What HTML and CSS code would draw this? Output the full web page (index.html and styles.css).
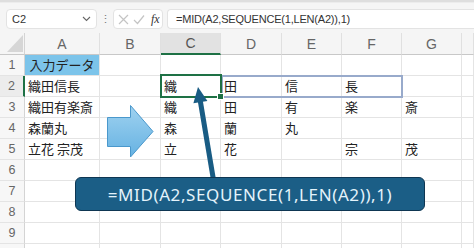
FILE: index.html
```html
<!DOCTYPE html>
<html lang="ja">
<head>
<meta charset="utf-8">
<title>MID + SEQUENCE</title>
<link rel="stylesheet" href="styles.css">
</head>
<body>
<div class="app">
  <div class="ribbon-edge"></div>
  <div class="formula-bar">
    <div class="name-box">
      <span>C2</span>
      <svg class="chevron" width="9" height="6" viewBox="0 0 9 6"><path d="M1 1 L4.5 4.5 L8 1" fill="none" stroke="#666" stroke-width="1.1"/></svg>
    </div>
    <span class="grip">⋮</span>
    <div class="fx-box">
      <svg width="11" height="11" viewBox="0 0 11 11"><path d="M1 1 L10 10 M10 1 L1 10" stroke="#c4c4c4" stroke-width="1.2"/></svg>
      <svg width="12" height="11" viewBox="0 0 12 11"><path d="M1 6 L4.5 9.5 L11 1.5" fill="none" stroke="#c4c4c4" stroke-width="1.2"/></svg>
      <span class="fx">fx</span>
    </div>
    <div class="formula-input">=MID(A2,SEQUENCE(1,LEN(A2)),1)</div>
  </div>

  <div class="sheet">
    <div class="corner"><span class="corner-tri"></span></div>
    <div class="col-head">A</div>
    <div class="col-head">B</div>
    <div class="col-head is-active">C</div>
    <div class="col-head">D</div>
    <div class="col-head">E</div>
    <div class="col-head">F</div>
    <div class="col-head">G</div>
    <div class="col-head"></div>

    <div class="row-head">1</div>
    <div class="cell cell-label">入力データ</div><div class="cell"></div><div class="cell"></div><div class="cell"></div><div class="cell"></div><div class="cell"></div><div class="cell"></div><div class="cell"></div>

    <div class="row-head is-active">2</div>
    <div class="cell">織田信長</div><div class="cell"></div><div class="cell">織</div><div class="cell">田</div><div class="cell">信</div><div class="cell">長</div><div class="cell"></div><div class="cell"></div>

    <div class="row-head">3</div>
    <div class="cell">織田有楽斎</div><div class="cell"></div><div class="cell">織</div><div class="cell">田</div><div class="cell">有</div><div class="cell">楽</div><div class="cell">斎</div><div class="cell"></div>

    <div class="row-head">4</div>
    <div class="cell">森蘭丸</div><div class="cell"></div><div class="cell">森</div><div class="cell">蘭</div><div class="cell">丸</div><div class="cell"></div><div class="cell"></div><div class="cell"></div>

    <div class="row-head">5</div>
    <div class="cell">立花 宗茂</div><div class="cell"></div><div class="cell">立</div><div class="cell">花</div><div class="cell"></div><div class="cell">宗</div><div class="cell">茂</div><div class="cell"></div>

    <div class="row-head">6</div>
    <div class="cell"></div><div class="cell"></div><div class="cell"></div><div class="cell"></div><div class="cell"></div><div class="cell"></div><div class="cell"></div><div class="cell"></div>

    <div class="row-head">7</div>
    <div class="cell"></div><div class="cell"></div><div class="cell"></div><div class="cell"></div><div class="cell"></div><div class="cell"></div><div class="cell"></div><div class="cell"></div>

    <div class="row-head">8</div>
    <div class="cell"></div><div class="cell"></div><div class="cell"></div><div class="cell"></div><div class="cell"></div><div class="cell"></div><div class="cell"></div><div class="cell"></div>

    <div class="row-head">9</div>
    <div class="cell"></div><div class="cell"></div><div class="cell"></div><div class="cell"></div><div class="cell"></div><div class="cell"></div><div class="cell"></div><div class="cell"></div>

    <div class="row-head"></div>
    <div class="cell"></div><div class="cell"></div><div class="cell"></div><div class="cell"></div><div class="cell"></div><div class="cell"></div><div class="cell"></div><div class="cell"></div>

    <!-- spill range D2:F2 and the active cell C2 -->
    <div class="spill-range"></div>
    <div class="active-cell"><span class="fill-handle"></span></div>
  </div>

  <!-- block arrow and pointer line drawn over the grid -->
  <svg class="annotations" width="474" height="248" viewBox="0 0 474 248">
    <defs>
      <linearGradient id="arrowFill" x1="0" y1="0" x2="0" y2="1">
        <stop offset="0" stop-color="#9fd2f0"/>
        <stop offset="1" stop-color="#66b2e2"/>
      </linearGradient>
    </defs>
    <path d="M107.5 117.5 H130.5 V105.5 L153 131.5 L130.5 157 V146.5 H107.5 Z" fill="url(#arrowFill)" stroke="#4a98cc" stroke-width="1"/>
    <line x1="213.5" y1="180" x2="200.3" y2="101" stroke="#195c84" stroke-width="5"/>
    <path d="M198 87 L207.4 101 L193.4 103.2 Z" fill="#195c84"/>
  </svg>

  <div class="callout">=MID(A2,SEQUENCE(1,LEN(A2)),1)</div>
</div>
</body>
</html>
```
FILE: styles.css
```css
html, body {
  margin: 0;
  padding: 0;
  background: #ffffff;
}

.app {
  position: relative;
  width: 474px;
  height: 248px;
  overflow: hidden;
  font-family: "Liberation Sans", "Noto Sans", sans-serif;
  background: #f5f5f5;
}

.ribbon-edge {
  height: 3px;
  background: #dedede;
  border-bottom: 1px solid #ececec;
  box-sizing: border-box;
}

/* formula bar */
.formula-bar {
  height: 30px;
  display: flex;
  align-items: flex-start;
  padding-top: 6px;
  box-sizing: border-box;
}

.name-box {
  margin-left: 6px;
  width: 91px;
  height: 20px;
  box-sizing: border-box;
  background: #ffffff;
  border: 1px solid #e3e3e3;
  border-radius: 4px;
  display: flex;
  align-items: center;
  justify-content: space-between;
  padding: 0 5px 0 5px;
  font-size: 11px;
  color: #333;
}

.chevron {
  display: block;
}

.grip {
  width: 16px;
  text-align: center;
  font-size: 11px;
  line-height: 20px;
  color: #777;
}

.fx-box {
  width: 50px;
  height: 20px;
  box-sizing: border-box;
  background: #ffffff;
  border: 1px solid #e3e3e3;
  border-radius: 4px;
  display: flex;
  align-items: center;
  gap: 4px;
  padding-left: 4px;
}

.fx-box svg {
  display: block;
}

.fx {
  font-family: "Liberation Serif", serif;
  font-style: italic;
  font-size: 12px;
  color: #333;
  margin-left: 2px;
}

.formula-input {
  margin-left: 4px;
  flex: 1;
  height: 20px;
  box-sizing: border-box;
  background: #ffffff;
  border: 1px solid #e3e3e3;
  border-right: none;
  border-radius: 4px 0 0 4px;
  padding-left: 8px;
  font-size: 11px;
  letter-spacing: -0.2px;
  line-height: 18px;
  color: #333;
}

/* worksheet grid */
.sheet {
  position: relative;
  display: grid;
  grid-template-columns: 25px 75px 61px 60px 61px 60px 60px 60px 1fr;
  grid-template-rows: 22px repeat(10, 21px);
  background: #ffffff;
}

.corner {
  background: #f5f5f5;
  border-right: 1px solid #d4d4d4;
  border-bottom: 1px solid #c8c8c8;
  box-sizing: border-box;
  display: flex;
  align-items: flex-end;
  justify-content: flex-end;
  padding: 0 1px 2px 0;
}

.corner-tri {
  width: 0;
  height: 0;
  border-left: 16px solid transparent;
  border-bottom: 17px solid #d6d6d6;
}

.col-head {
  background: #f5f5f5;
  border-right: 1px solid #e0e0e0;
  border-bottom: 1px solid #c8c8c8;
  box-sizing: border-box;
  display: flex;
  align-items: center;
  justify-content: center;
  font-size: 14px;
  color: #666;
}

.col-head.is-active {
  background: #e2e2e2;
  border-bottom: 2px solid #1e7145;
  color: #555;
}

.row-head {
  background: #f7f7f7;
  border-right: 1px solid #d4d4d4;
  border-bottom: 1px solid #e4e4e4;
  box-sizing: border-box;
  display: flex;
  align-items: center;
  justify-content: center;
  font-size: 12.5px;
  color: #666;
}

.row-head.is-active {
  border-right: 2px solid #1e7145;
  background: #ececec;
}

.cell {
  border-right: 1px solid #e4e4e4;
  border-bottom: 1px solid #e4e4e4;
  box-sizing: border-box;
  padding-left: 3px;
  font-family: "Noto Sans CJK JP", "Noto Sans", sans-serif;
  font-size: 13px;
  line-height: 20px;
  color: #222;
  white-space: nowrap;
  overflow: hidden;
}

.cell-label {
  background: #7cc4ea;
  padding-left: 0;
  text-align: center;
}

.spill-range {
  position: absolute;
  left: 221px;
  top: 42px;
  width: 182px;
  height: 23px;
  box-sizing: border-box;
  border: 2px solid #98aacb;
}

.active-cell {
  position: absolute;
  left: 160px;
  top: 41px;
  width: 62px;
  height: 24px;
  box-sizing: border-box;
  border: 2px solid #1e7145;
}

.fill-handle {
  position: absolute;
  right: -4px;
  bottom: -4px;
  width: 5px;
  height: 5px;
  background: #1e7145;
  border: 1px solid #ffffff;
}

.annotations {
  position: absolute;
  left: 0;
  top: 0;
  pointer-events: none;
}

.callout {
  position: absolute;
  left: 75px;
  top: 177px;
  width: 350px;
  height: 34px;
  box-sizing: border-box;
  background: #1b5e86;
  border: 1px solid #0e3652;
  border-radius: 6px;
  display: flex;
  align-items: center;
  justify-content: center;
  font-family: "Noto Sans", sans-serif;
  font-size: 17px;
  letter-spacing: 0.6px;
  color: #e4f3fb;
}
```
